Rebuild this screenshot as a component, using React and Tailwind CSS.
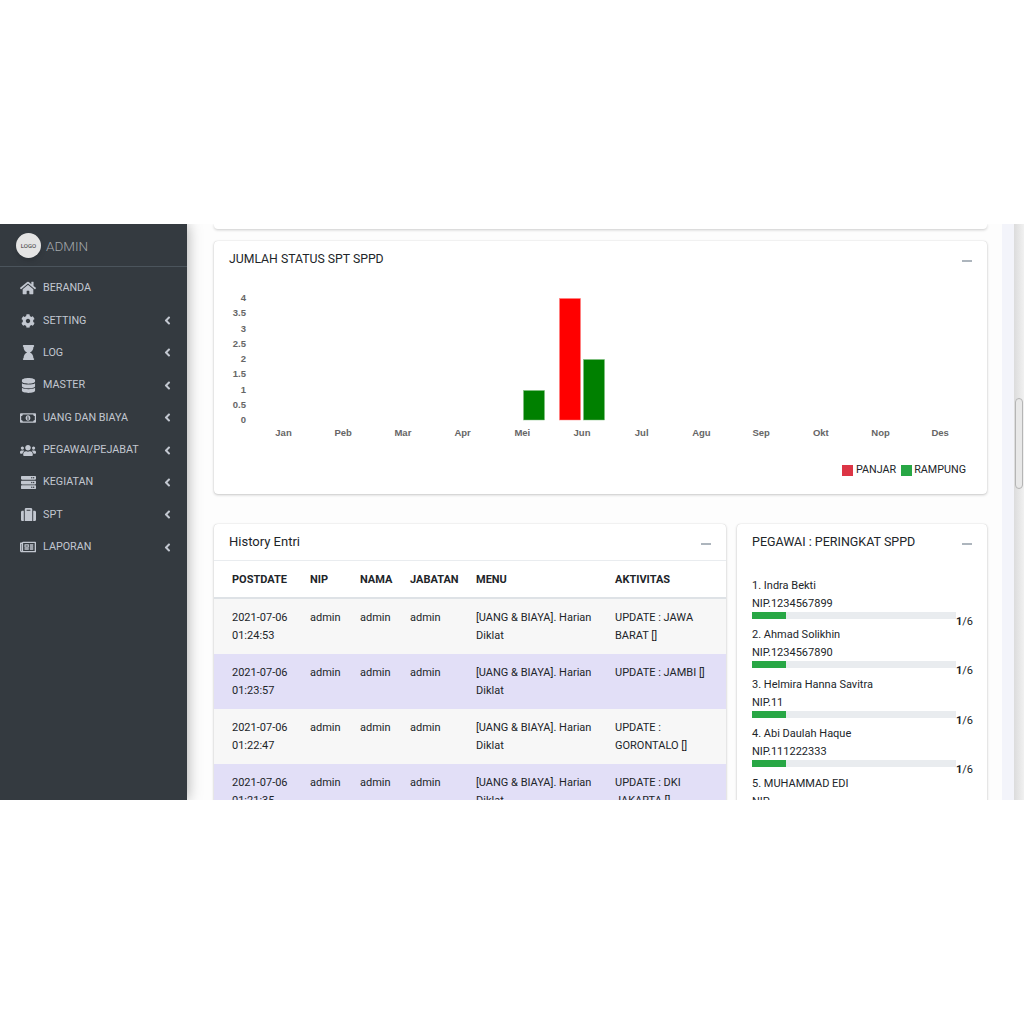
import { FaHome, FaCog, FaHourglass, FaDatabase, FaRegMoneyBillAlt, FaUsers, FaServer, FaSuitcase, FaRegNewspaper, FaAngleLeft } from "react-icons/fa";

const menu = [
  { label: "BERANDA", icon: FaHome, size: "text-[16px]" },
  { label: "SETTING", icon: FaCog, size: "text-[14px]", arrow: true },
  { label: "LOG", icon: FaHourglass, size: "text-[15px]", arrow: true },
  { label: "MASTER", icon: FaDatabase, size: "text-[15px]", arrow: true },
  { label: "UANG DAN BIAYA", icon: FaRegMoneyBillAlt, size: "text-[16px]", arrow: true },
  { label: "PEGAWAI/PEJABAT", icon: FaUsers, size: "text-[17px]", arrow: true },
  { label: "KEGIATAN", icon: FaServer, size: "text-[15px]", arrow: true },
  { label: "SPT", icon: FaSuitcase, size: "text-[15px]", arrow: true },
  { label: "LAPORAN", icon: FaRegNewspaper, size: "text-[16px]", arrow: true },
];

const months = ["Jan", "Peb", "Mar", "Apr", "Mei", "Jun", "Jul", "Agu", "Sep", "Okt", "Nop", "Des"];
const ticks = ["4", "3.5", "3", "2.5", "2", "1.5", "1", "0.5", "0"];

const history = [
  { time: "01:24:53", act: "UPDATE : JAWA BARAT []" },
  { time: "01:23:57", act: "UPDATE : JAMBI []" },
  { time: "01:22:47", act: "UPDATE : GORONTALO []" },
  { time: "01:21:35", act: "UPDATE : DKI JAKARTA []" },
];

const ranking = [
  { name: "1. Indra Bekti", nip: "NIP.1234567899" },
  { name: "2. Ahmad Solikhin", nip: "NIP.1234567890" },
  { name: "3. Helmira Hanna Savitra", nip: "NIP.11" },
  { name: "4. Abi Daulah Haque", nip: "NIP.111222333" },
];

const Minus = () => <div className="mt-[4px] h-[2px] w-[10px] bg-[#adb5bd]" />;

const Sidebar = () => (
  <aside className="w-[187px] shrink-0 bg-[#343a40] shadow-[0_0_14px_rgba(0,0,0,0.35)] z-10">
    <div className="h-[43px] flex items-center pl-4 gap-[5px] border-b border-[#4b545c]">
      <div className="w-[25px] h-[25px] rounded-full bg-[#e4e4e4] flex items-center justify-center text-[6px] text-[#333] shadow-md">LOGO</div>
      <span className="mt-[2px] text-[13.5px] text-[#a5a9ad] font-light">ADMIN</span>
    </div>
    <nav className="pt-[5px]">
      {menu.map((m) => (
        <div key={m.label} className="h-[32.4px] flex items-center pl-[20px] pr-[13px] text-[#c2c7d0]">
          <span className="w-[16px] flex justify-center"><m.icon className={m.size} /></span>
          <span className="ml-[7px] flex-1 text-[10.75px] whitespace-nowrap">{m.label}</span>
          {m.arrow && <FaAngleLeft className="text-[13px]" />}
        </div>
      ))}
    </nav>
  </aside>
);

const StatusChart = () => (
  <svg width="773" height="170" viewBox="214 277 773 170" className="block">
    {ticks.map((t, i) => (
      <text key={t} x="246" y={301 + i * 15.25} textAnchor="end" fontSize="9.5" fontWeight="700" fill="#666" fontFamily="Liberation Sans">{t}</text>
    ))}
    {months.map((m, i) => (
      <text key={m} x={283.5 + i * 59.7} y="436" textAnchor="middle" fontSize="9.5" fontWeight="700" fill="#666" fontFamily="Liberation Sans">{m}</text>
    ))}
    <rect x="523.5" y="390.5" width="21" height="29.5" fill="#008000" stroke="#80bf80" strokeWidth="0.5" />
    <rect x="559.5" y="298.5" width="21" height="121.5" fill="#ff0000" stroke="#ff8080" strokeWidth="0.5" />
    <rect x="583.5" y="359.5" width="21" height="60.5" fill="#008000" stroke="#80bf80" strokeWidth="0.5" />
  </svg>
);

export default function App() {
  return (
    <div className="h-screen flex flex-col bg-white font-['Roboto',sans-serif] overflow-hidden">
      <div className="h-[224px] shrink-0" />
      <div className="h-[576px] shrink-0 flex overflow-hidden">
        <Sidebar />
        <main className="flex-1 bg-[#fdfdfd] overflow-hidden pl-[27px] pr-[15px]">
          <div className="h-[5px] bg-white rounded-b shadow-[0_1px_3px_rgba(0,0,0,0.2)]" />
          <section className="mt-[12px] h-[253px] bg-white rounded shadow-[0_0_1px_rgba(0,0,0,0.2),0_1px_3px_rgba(0,0,0,0.2)]">
            <div className="h-[36px] px-[15px] flex items-center justify-between text-[#212529]">
              <h3 className="text-[12.25px]">JUMLAH STATUS SPT SPPD</h3>
              <Minus />
            </div>
            <StatusChart />
            <div className="flex justify-end items-center pr-[21px] text-[10.75px] text-[#212529] mt-[15px]">
              <span className="w-[11px] h-[11px] bg-[#dc3545] mr-[3px]" />
              <span className="mr-[5px]">PANJAR</span>
              <span className="w-[11px] h-[11px] bg-[#28a745] mr-[2px]" />
              <span>RAMPUNG</span>
            </div>
          </section>
          <div className="mt-[30px] flex gap-[11px] items-start">
            <section className="w-[512px] bg-white rounded-t shadow-[0_0_1px_rgba(0,0,0,0.2),0_1px_3px_rgba(0,0,0,0.2)]">
              <div className="h-[37px] px-[15px] flex items-center justify-between border-b border-[#e9ecef] text-[#212529]">
                <h3 className="text-[13px]">History Entri</h3>
                <Minus />
              </div>
              <table className="w-full text-[11px] text-[#212529] table-fixed">
                <thead>
                  <tr className="h-[37px] border-b-2 border-[#dee2e6] text-left">
                    <th className="w-[78px] pl-[18px] pt-[3px] box-content font-bold">POSTDATE</th>
                    <th className="w-[50px] pt-[3px] font-bold">NIP</th>
                    <th className="w-[50px] pt-[3px] font-bold">NAMA</th>
                    <th className="w-[66px] pt-[3px] font-bold">JABATAN</th>
                    <th className="w-[139px] pt-[3px] font-bold">MENU</th>
                    <th className="pt-[3px] font-bold">AKTIVITAS</th>
                  </tr>
                </thead>
                <tbody>
                  {history.map((h, i) => (
                    <tr key={h.time} className={i % 2 ? "bg-[#e2dff7] align-top" : "bg-[#f7f7f7] align-top"}>
                      <td className="pl-[18px] py-[9.5px] leading-[18px]">2021-07-06<br />{h.time}</td>
                      <td className="py-[9.5px] leading-[18px]">admin</td>
                      <td className="py-[9.5px] leading-[18px]">admin</td>
                      <td className="py-[9.5px] leading-[18px]">admin</td>
                      <td className="py-[9.5px] pr-[10px] leading-[18px]">[UANG &amp; BIAYA]. Harian Diklat</td>
                      <td className="py-[9.5px] pr-[10px] leading-[18px]">{h.act}</td>
                    </tr>
                  ))}
                </tbody>
              </table>
            </section>
            <section className="w-[250px] bg-white rounded-t shadow-[0_0_1px_rgba(0,0,0,0.2),0_1px_3px_rgba(0,0,0,0.2)]">
              <div className="h-[36px] px-[15px] flex items-center justify-between text-[#212529]">
                <h3 className="text-[12.5px]">PEGAWAI : PERINGKAT SPPD</h3>
                <Minus />
              </div>
              <div className="px-[15px] pt-[17px] text-[11px] text-[#212529] leading-[18px]">
                {ranking.map((r) => (
                  <div key={r.nip} className="h-[49.4px]">
                    <div>{r.name}</div>
                    <div>{r.nip}</div>
                    <div className="relative -mt-[1px] h-[7px] w-[204px] bg-[#e9ecef]">
                      <div className="h-full w-[34px] bg-[#28a745]" />
                      <span className="absolute left-[204px] top-[1px] whitespace-nowrap"><b>1</b>/6</span>
                    </div>
                  </div>
                ))}
                <div>5. MUHAMMAD EDI</div>
                <div>NIP.</div>
              </div>
            </section>
          </div>
        </main>
        <div className="w-[12px] shrink-0 bg-[#f3f4fa]" />
        <div className="w-[10px] shrink-0 bg-gradient-to-r from-[#dcdcdc] to-[#f1f1f1] relative">
          <div className="absolute left-[1px] top-[174px] w-[8px] h-[91px] rounded bg-[#e8e8e8] border border-[#b5b5b5]" />
        </div>
      </div>
    </div>
  );
}
